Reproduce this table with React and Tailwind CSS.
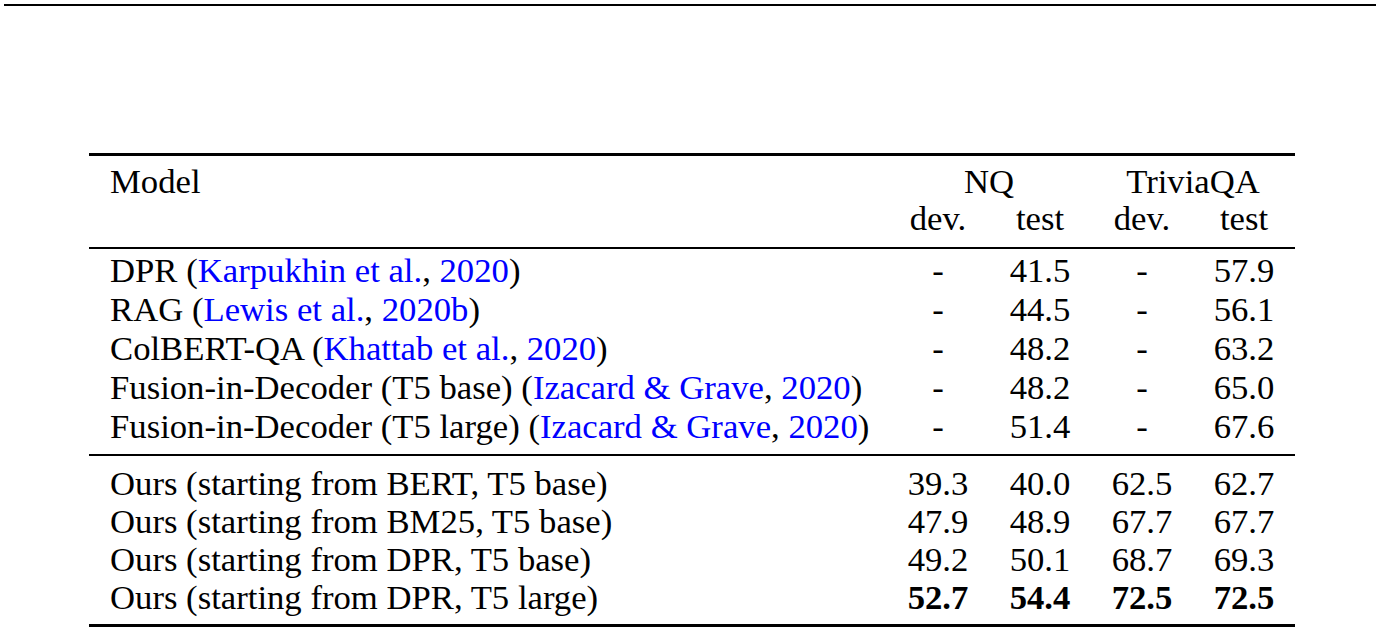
import React from 'react'

const Cite = ({ authors, year }) => (
  <>
    (<span className="text-[#0000ff]">{authors}</span>, <span className="text-[#0000ff]">{year}</span>)
  </>
)

const baselines = [
  { name: <>DPR <Cite authors="Karpukhin et al." year="2020" /></>, values: ['-', '41.5', '-', '57.9'] },
  { name: <>RAG <Cite authors="Lewis et al." year="2020b" /></>, values: ['-', '44.5', '-', '56.1'] },
  { name: <>ColBERT-QA <Cite authors="Khattab et al." year="2020" /></>, values: ['-', '48.2', '-', '63.2'] },
  { name: <>Fusion-in-Decoder (T5 base) <Cite authors="Izacard &amp; Grave" year="2020" /></>, values: ['-', '48.2', '-', '65.0'] },
  { name: <>Fusion-in-Decoder (T5 large) <Cite authors="Izacard &amp; Grave" year="2020" /></>, values: ['-', '51.4', '-', '67.6'] },
]

const ours = [
  { name: 'Ours (starting from BERT, T5 base)', values: ['39.3', '40.0', '62.5', '62.7'] },
  { name: 'Ours (starting from BM25, T5 base)', values: ['47.9', '48.9', '67.7', '67.7'] },
  { name: 'Ours (starting from DPR, T5 base)', values: ['49.2', '50.1', '68.7', '69.3'] },
  { name: 'Ours (starting from DPR, T5 large)', values: ['52.7', '54.4', '72.5', '72.5'], bold: true },
]

function Row({ name, values, bold, tall }) {
  return (
    <div className={`grid grid-cols-[1fr_102px_102px_102px_102px] ${tall ? 'h-[39px]' : 'h-[38px]'}`}>
      <div className="pl-[21px] whitespace-nowrap">{name}</div>
      {values.map((v, i) => (
        <div key={i} className={`text-center ${bold ? 'font-bold' : ''}`}>
          {v}
        </div>
      ))}
    </div>
  )
}

export default function App() {
  return (
    <div className="w-[1380px] h-[631px] bg-white text-black overflow-hidden font-['Liberation_Serif','Times_New_Roman',serif] text-[34.7px] leading-[38px]">
      {/* page top rule */}
      <div className="mx-[4px] pt-[4px]">
        <div className="h-[2px] bg-black" />
      </div>

      <div className="ml-[89px] w-[1206px] mt-[147px]">
        <div className="h-[3px] bg-black" />

        {/* header */}
        <div className="pt-[7px] pb-[9px]">
          <div className="grid grid-cols-[1fr_102px_102px_102px_102px] h-[37px]">
            <div className="pl-[21px]">Model</div>
            <div className="col-span-2 text-center">NQ</div>
            <div className="col-span-2 text-center">TriviaQA</div>
          </div>
          <Row name="" values={['dev.', 'test', 'dev.', 'test']} />
        </div>
        <div className="h-[2px] bg-black" />

        {/* prior work */}
        <div className="pt-[3px] pb-[7px]">
          {baselines.map((r, i) => (
            <Row key={i} {...r} tall />
          ))}
        </div>
        <div className="h-[2px] bg-black" />

        {/* ours */}
        <div className="pt-[9px] pb-[7px]">
          {ours.map((r, i) => (
            <Row key={i} {...r} />
          ))}
        </div>
        <div className="h-[3px] bg-black" />
      </div>
    </div>
  )
}
